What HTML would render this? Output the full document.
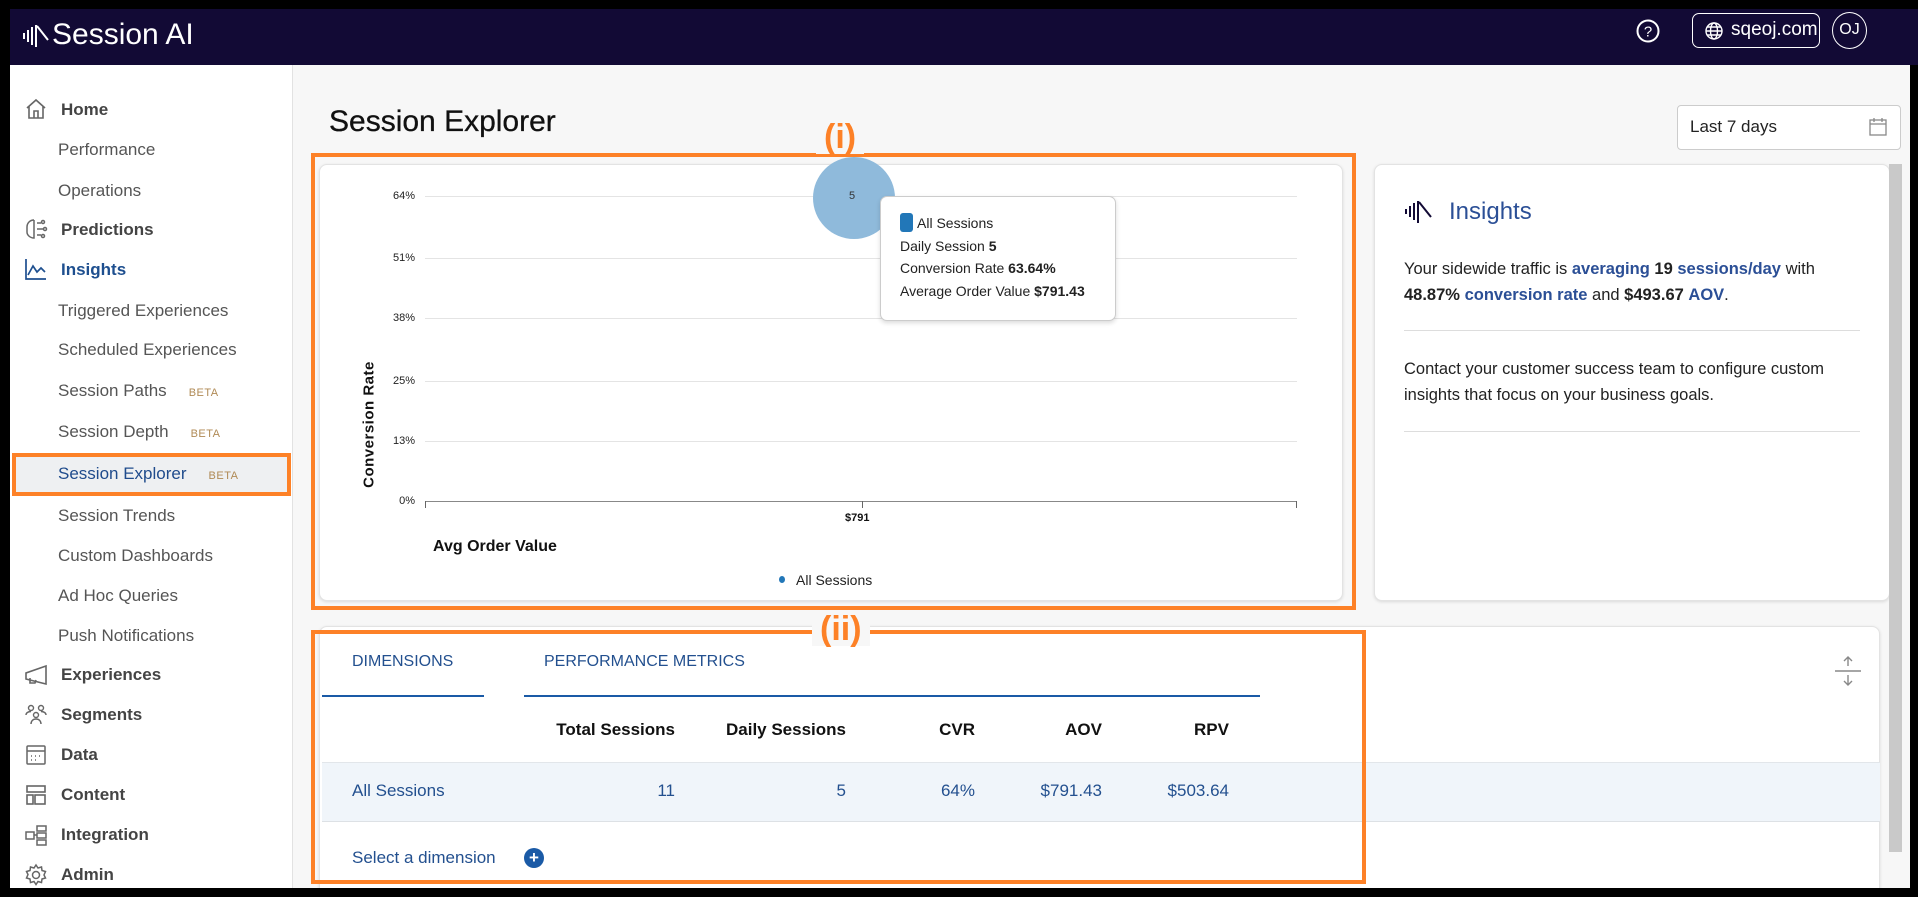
<!DOCTYPE html>
<html><head><meta charset="utf-8"><style>
*{box-sizing:border-box;margin:0;padding:0}
body{width:1918px;height:897px;overflow:hidden;background:#000;font-family:"Liberation Sans",sans-serif;position:relative}
.a{position:absolute}
#top{left:10px;top:9px;width:1908px;height:56px;background:#120a35}
#side{left:10px;top:65px;width:283px;height:823px;background:#fff;border-right:1px solid #e2e2e2}
#main{left:293px;top:65px;width:1617px;height:823px;background:#f7f7f7}
.nav{position:absolute;font-size:17px;color:#555;white-space:nowrap}
.nav.b{font-weight:bold;color:#444;left:51px}
.nav.s{left:48px}
.beta{font-size:11px;color:#b08a55;margin-left:22px;letter-spacing:.5px}
.ic{position:absolute;left:14px;width:24px;height:24px}
.card{position:absolute;background:#fff;border:1px solid #e3e3e3;border-radius:8px;box-shadow:0 1px 3px rgba(0,0,0,.12)}
.ob{position:absolute;border:4px solid #fd8127}
.ol{position:absolute;background:#f7f7f7;color:#fd8127;font-weight:bold;font-size:34px;padding:0 8px;line-height:34px}
.yl{position:absolute;font-size:11px;color:#222;width:40px;text-align:right;left:375px}
.gl{position:absolute;left:425px;width:872px;height:1px;background:#e4e4e4}
.th{position:absolute;top:720px;font-size:17px;font-weight:bold;color:#111;text-align:right;width:150px}
.td{position:absolute;top:781px;font-size:17px;color:#23508f;text-align:right;width:150px}
.blue{color:#2b4f96;font-weight:bold}
</style></head><body>
<div class="a" id="top">
 <svg class="a" style="left:12px;top:14px" width="30" height="26" viewBox="0 0 30 26" stroke="#fff" stroke-width="2" fill="none"><path d="M2 10v6M6 7v12M10 4v18M14 2v22M15 3l11 14"/></svg>
 <div class="a" style="left:42px;top:9px;color:#fff;font-size:30px">Session AI</div>
 <svg class="a" style="left:1625px;top:9px" width="26" height="26" viewBox="0 0 26 26"><circle cx="13" cy="13" r="10.5" stroke="#fff" stroke-width="2" fill="none"/><text x="13" y="18.5" fill="#fff" font-size="15" text-anchor="middle" font-family="Liberation Sans">?</text></svg>
 <div class="a" style="left:1682px;top:4px;width:128px;height:35px;border:1.5px solid #fff;border-radius:7px"></div>
 <svg class="a" style="left:1694px;top:12px" width="20" height="20" viewBox="0 0 20 20" stroke="#fff" stroke-width="1.4" fill="none"><circle cx="10" cy="10" r="8"/><ellipse cx="10" cy="10" rx="3.5" ry="8"/><path d="M2 10h16M3.5 6h13M3.5 14h13"/></svg>
 <div class="a" style="left:1721px;top:10px;color:#fff;font-size:19px">sqeoj.com</div>
 <div class="a" style="left:1822px;top:3px;width:35px;height:37px;border:1.5px solid #fff;border-radius:50%;color:#fff;font-size:16px;text-align:center;line-height:34px">OJ</div>
</div>
<div class="a" id="side">
 <svg class="ic" style="top:32px" viewBox="0 0 24 24" stroke="#666" stroke-width="1.6" fill="none"><path d="M3 11L12 3l9 8M5 9v12h14V9M10 21v-7h4v7"/></svg>
 <div class="nav b" style="top:35px">Home</div>
 <div class="nav s" style="top:75px">Performance</div>
 <div class="nav s" style="top:116px">Operations</div>
 <svg class="ic" style="top:152px" viewBox="0 0 24 24" stroke="#666" stroke-width="1.5" fill="none"><path d="M10 3C6 3 3 6 3 10v5c0 3 3 6 7 6V3M13 6h4M13 12h6M13 18h4"/><circle cx="19" cy="5" r="1.5"/><circle cx="21" cy="12" r="1.5"/><circle cx="19" cy="19" r="1.5"/></svg>
 <div class="nav b" style="top:155px">Predictions</div>
 <svg class="ic" style="top:192px" viewBox="0 0 24 24" stroke="#1e4f8f" stroke-width="1.7" fill="none"><path d="M2 2v20h20M4 18l5-9 4 6 4-4 4 4"/></svg>
 <div class="nav b" style="top:195px;color:#1e4f8f">Insights</div>
 <div class="nav s" style="top:236px">Triggered Experiences</div>
 <div class="nav s" style="top:275px">Scheduled Experiences</div>
 <div class="nav s" style="top:316px">Session Paths<span class="beta">BETA</span></div>
 <div class="nav s" style="top:357px">Session Depth<span class="beta">BETA</span></div>
 <div class="a" style="left:2px;top:388px;width:279px;height:43px;background:#eef0f2;border:4px solid #fd8127"></div>
 <div class="nav s" style="top:399px;color:#1f4b8c">Session Explorer<span class="beta">BETA</span></div>
 <div class="nav s" style="top:441px">Session Trends</div>
 <div class="nav s" style="top:481px">Custom Dashboards</div>
 <div class="nav s" style="top:521px">Ad Hoc Queries</div>
 <div class="nav s" style="top:561px">Push Notifications</div>
 <svg class="ic" style="top:598px" viewBox="0 0 24 24" stroke="#666" stroke-width="1.6" fill="none"><path d="M2 10v6l20 5V3L2 10zM6 15v5h5l1-3"/></svg>
 <div class="nav b" style="top:600px">Experiences</div>
 <svg class="ic" style="top:638px" viewBox="0 0 24 24" stroke="#666" stroke-width="1.4" fill="none"><circle cx="7" cy="5" r="2.5"/><circle cx="17" cy="5" r="2.5"/><circle cx="12" cy="12" r="2.5"/><path d="M2 12c0-2 2-3.5 5-3.5M22 12c0-2-2-3.5-5-3.5M7 21c0-3 2-5 5-5s5 2 5 5"/></svg>
 <div class="nav b" style="top:640px">Segments</div>
 <svg class="ic" style="top:678px" viewBox="0 0 24 24" stroke="#666" stroke-width="1.5" fill="none"><rect x="3" y="3" width="18" height="18" rx="1"/><path d="M3 8h18M7 13h1M11 13h1M15 13h1M7 17h1M11 17h1"/></svg>
 <div class="nav b" style="top:680px">Data</div>
 <svg class="ic" style="top:718px" viewBox="0 0 24 24" stroke="#666" stroke-width="1.6" fill="none"><rect x="3" y="3" width="18" height="6"/><rect x="3" y="12" width="6" height="9"/><rect x="11" y="12" width="10" height="9"/></svg>
 <div class="nav b" style="top:720px">Content</div>
 <svg class="ic" style="top:758px" viewBox="0 0 24 24" stroke="#666" stroke-width="1.5" fill="none"><rect x="2" y="9" width="8" height="7"/><rect x="13" y="3" width="9" height="5"/><rect x="13" y="10" width="9" height="5"/><rect x="13" y="17" width="9" height="5"/><path d="M10 12h3"/></svg>
 <div class="nav b" style="top:760px">Integration</div>
 <svg class="ic" style="top:798px" viewBox="0 0 24 24" stroke="#666" stroke-width="1.5" fill="none"><circle cx="12" cy="12" r="3.5"/><path d="M12 2l2 3 3.5-1 .5 3.5 3.5 1-1.5 3.5 1.5 3-3.5 1-.5 3.5-3.5-1-2 3-2-3-3.5 1-.5-3.5-3.5-1 1.5-3.5-1.5-3 3.5-1L6.5 4 10 5z"/></svg>
 <div class="nav b" style="top:800px">Admin</div>
</div>
<div class="a" id="main"></div>
<div class="a" style="left:329px;top:105px;font-size:30px;color:#111;-webkit-text-stroke:.3px #111">Session Explorer</div>
<div class="a" style="left:1677px;top:105px;width:224px;height:45px;background:#fff;border:1px solid #ccc;border-radius:4px"></div>
<div class="a" style="left:1690px;top:117px;font-size:17px;color:#222">Last 7 days</div>
<svg class="a" style="left:1868px;top:117px" width="20" height="20" viewBox="0 0 20 20" stroke="#888" stroke-width="1.3" fill="none"><rect x="2" y="3" width="16" height="15"/><path d="M2 7h16M6 1v4M14 1v4"/></svg>

<div class="card" style="left:319px;top:164px;width:1024px;height:437px"></div>
<div class="gl" style="top:196px"></div><div class="gl" style="top:258px"></div><div class="gl" style="top:318px"></div><div class="gl" style="top:381px"></div><div class="gl" style="top:441px"></div>
<div class="a" style="left:425px;top:501px;width:872px;height:1px;background:#888"></div>
<div class="a" style="left:425px;top:501px;width:1px;height:7px;background:#666"></div>
<div class="a" style="left:862px;top:501px;width:1px;height:7px;background:#666"></div>
<div class="a" style="left:1296px;top:501px;width:1px;height:7px;background:#666"></div>
<div class="yl" style="top:190px">64%</div><div class="yl" style="top:252px">51%</div><div class="yl" style="top:312px">38%</div><div class="yl" style="top:375px">25%</div><div class="yl" style="top:435px">13%</div><div class="yl" style="top:495px">0%</div>
<div class="a" style="left:289px;top:416px;transform:rotate(-90deg);transform-origin:center;width:160px;text-align:center;font-size:15px;font-weight:bold;color:#111;letter-spacing:.5px;white-space:nowrap">Conversion Rate</div>
<div class="a" style="left:813px;top:157px;width:82px;height:82px;border-radius:50%;background:#8fbadb"></div>
<div class="a" style="left:849px;top:190px;font-size:11px;color:#333">5</div>
<div class="a" style="left:880px;top:196px;width:236px;height:125px;background:#fff;border:1px solid #ccc;border-radius:7px;box-shadow:0 2px 5px rgba(0,0,0,.15);font-size:14px;color:#222;line-height:22.5px;padding:15px 0 0 19px">
 <div><span style="display:inline-block;width:13px;height:19px;background:#2277b8;border-radius:3px;vertical-align:-4px;margin-right:4px"></span>All Sessions</div>
 <div>Daily Session <b>5</b></div><div>Conversion Rate <b>63.64%</b></div><div>Average Order Value <b>$791.43</b></div>
</div>
<div class="a" style="left:845px;top:512px;font-size:11px;font-weight:bold;color:#111">$791</div>
<div class="a" style="left:433px;top:538px;font-size:16px;font-weight:bold;color:#111">Avg Order Value</div>
<div class="a" style="left:779px;top:576px;width:6px;height:7px;border-radius:50%;background:#2277b8"></div>
<div class="a" style="left:796px;top:572px;font-size:14px;color:#222">All Sessions</div>
<div class="ob" style="left:311px;top:153px;width:1045px;height:457px"></div>
<div class="ol" style="left:816px;top:120px">(i)</div>

<div class="card" style="left:1374px;top:164px;width:516px;height:437px"></div>
<svg class="a" style="left:1404px;top:200px" width="34" height="24" viewBox="0 0 34 24" stroke="#120a35" stroke-width="2" fill="none"><path d="M2 9v5M6 6v11M10 3v17M14 1v22M15 2l12 15"/></svg>
<div class="a" style="left:1449px;top:198px;font-size:24px;color:#2b4f96">Insights</div>
<div class="a" style="left:1404px;top:256px;font-size:16.5px;color:#222;line-height:26px;width:460px">Your sidewide traffic is <span class="blue">averaging</span> <b>19</b> <span class="blue">sessions/day</span> with<br><b>48.87%</b> <span class="blue">conversion rate</span> and <b>$493.67</b> <span class="blue">AOV</span>.</div>
<div class="a" style="left:1404px;top:330px;width:456px;height:1px;background:#ddd"></div>
<div class="a" style="left:1404px;top:356px;font-size:16.5px;color:#222;line-height:26px;width:460px">Contact your customer success team to configure custom insights that focus on your business goals.</div>
<div class="a" style="left:1404px;top:431px;width:456px;height:1px;background:#ddd"></div>

<div class="card" style="left:319px;top:626px;width:1561px;height:270px"></div>
<div class="a" style="left:352px;top:653px;font-size:16px;color:#23508f">DIMENSIONS</div>
<div class="a" style="left:544px;top:653px;font-size:16px;color:#23508f">PERFORMANCE METRICS</div>
<div class="a" style="left:322px;top:695px;width:162px;height:2px;background:#1a5aa6"></div>
<div class="a" style="left:524px;top:695px;width:736px;height:2px;background:#1a5aa6"></div>
<svg class="a" style="left:1834px;top:655px" width="28" height="32" viewBox="0 0 28 32" stroke="#888" stroke-width="1.4" fill="none"><path d="M14 2v9M10 6l4-4 4 4M1 16h26M14 20v10M10 26l4 4 4-4"/></svg>
<div class="th" style="left:525px">Total Sessions</div><div class="th" style="left:696px">Daily Sessions</div><div class="th" style="left:825px">CVR</div><div class="th" style="left:952px">AOV</div><div class="th" style="left:1079px">RPV</div>
<div class="a" style="left:322px;top:762px;width:1558px;height:60px;background:#f0f5fa;border-top:1px solid #e2e6ea;border-bottom:1px solid #dde1e5"></div>
<div class="a" style="left:352px;top:781px;font-size:17px;color:#23508f">All Sessions</div>
<div class="td" style="left:525px">11</div><div class="td" style="left:696px">5</div><div class="td" style="left:825px">64%</div><div class="td" style="left:952px">$791.43</div><div class="td" style="left:1079px">$503.64</div>
<div class="a" style="left:352px;top:848px;font-size:17px;color:#23508f">Select a dimension</div>
<div class="a" style="left:524px;top:848px;width:20px;height:20px;border-radius:50%;background:#1a5aa6;color:#fff;font-size:17px;font-weight:bold;text-align:center;line-height:20px">+</div>
<div class="ob" style="left:311px;top:630px;width:1055px;height:254px"></div>
<div class="ol" style="left:812px;top:612px">(ii)</div>

<div class="a" style="left:1889px;top:164px;width:13px;height:688px;background:#c9c9c9"></div>
<div class="a" style="left:0;top:888px;width:1918px;height:9px;background:#000"></div>
</body></html>
